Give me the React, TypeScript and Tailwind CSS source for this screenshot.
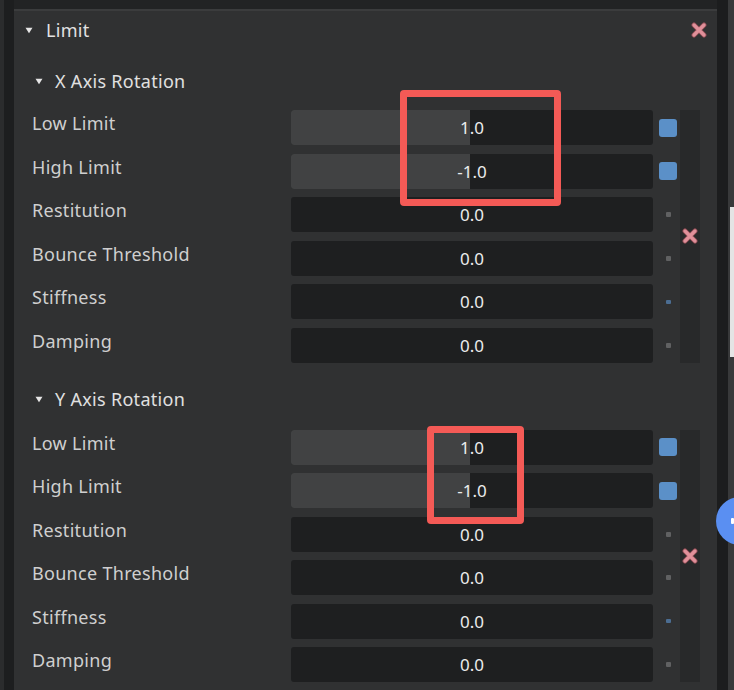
import type { ReactNode } from "react";

type Row = { label: string; value: string; slider?: boolean; marker: "blue" | "dot" | "bluedot" };

const rows: Row[] = [
  { label: "Low Limit", value: "1.0", slider: true, marker: "blue" },
  { label: "High Limit", value: "-1.0", slider: true, marker: "blue" },
  { label: "Restitution", value: "0.0", marker: "dot" },
  { label: "Bounce Threshold", value: "0.0", marker: "dot" },
  { label: "Stiffness", value: "0.0", marker: "bluedot" },
  { label: "Damping", value: "0.0", marker: "dot" },
];

function Triangle() {
  return (
    <svg width="8" height="7" viewBox="0 0 8 7" className="shrink-0">
      <path d="M0.5 0.8 L7.5 0.8 L4 6.2 Z" fill="#e6e6e6" />
    </svg>
  );
}

function PinkX() {
  return (
    <svg width="16" height="16" viewBox="0 0 16 16">
      <path d="M3 3 L13 13 M13 3 L3 13" stroke="#8a4a52" strokeWidth="5" strokeLinecap="round" />
      <path d="M3 3 L13 13 M13 3 L3 13" stroke="#e0909a" strokeWidth="3.4" strokeLinecap="round" />
    </svg>
  );
}

function Marker({ kind }: { kind: Row["marker"] }) {
  if (kind === "blue") return <div className="w-[18px] h-[18px] rounded-[3px] bg-[#5b90c8]" />;
  if (kind === "bluedot") return <div className="w-[5px] h-[4px] rounded-[1px] bg-[#4b6d92]" />;
  return <div className="w-[5px] h-[5px] rounded-[1px] bg-[#606162]" />;
}

function Field({ row }: { row: Row }) {
  return (
    <div className="flex h-[35px]">
      <div className="w-[259px] h-[24px] mt-[1px] leading-[24px] text-[18px] tracking-[0.3px] text-[#cfcfcf]">{row.label}</div>
      <div className="relative w-[362px] h-[35px] rounded-[3px] bg-[#1e1f20] overflow-hidden flex items-center justify-center">
        {row.slider && <div className="absolute left-0 top-0 bottom-0 w-[179px] bg-[#414243]" />}
        <span className="relative text-[17px] text-[#ececec] leading-none">{row.value}</span>
      </div>
      <div className="w-[18px] ml-[6px] flex items-center justify-center">
        <Marker kind={row.marker} />
      </div>
    </div>
  );
}

function Section({ title, children }: { title: string; children: ReactNode }) {
  return (
    <div className="flex flex-col">
      <div className="h-[38px] flex items-center pl-[21px] gap-[12px] text-[18px] tracking-[0.3px] text-[#e0e0e0]">
        <Triangle />
        <span>{title}</span>
      </div>
      {children}
    </div>
  );
}

function Body() {
  return (
    <div className="flex pl-[18px]">
      <div className="flex flex-col gap-[8.5px]">
        {rows.map((r) => (
          <Field key={r.label} row={r} />
        ))}
      </div>
      <div className="w-[20px] ml-[3px] bg-[#28292a] flex items-center justify-center">
        <PinkX />
      </div>
    </div>
  );
}

export default function App() {
  return (
    <div className="relative w-[734px] h-[690px] overflow-hidden bg-[#242526] flex font-['Noto_Sans',sans-serif]">
      <div className="w-[4px] bg-[#2b2c2d]" />
      <div className="w-[10px] bg-[#1d1e1f]" />

      <div className="w-[703px] flex flex-col">
        <div className="h-[9px] bg-[#222324]" />
        <div className="h-[2px] bg-[#3b3c3d]" />
        <div className="flex-1 bg-[#303132] flex flex-col">
          <div className="h-[38px] flex items-center pl-[11px] pr-[10px] gap-[13px] text-[18px] tracking-[0.3px] text-[#e2e2e2]">
            <Triangle />
            <span className="flex-1">Limit</span>
            <PinkX />
          </div>

          <div className="mt-[13px]">
            <Section title="X Axis Rotation">
              <div className="mt-[10px]">
                <Body />
              </div>
            </Section>
          </div>

          <div className="mt-[18px]">
            <Section title="Y Axis Rotation">
              <div className="mt-[11px]">
                <Body />
              </div>
            </Section>
          </div>
        </div>
      </div>

      <div className="w-[11px] bg-[#1c1d1e]" />
      <div className="w-[6px] bg-[#38393a] flex flex-col">
        <div className="h-[207px]" />
        <div className="h-[150px] ml-auto w-[4px] bg-[#e4e4e4]" />
      </div>

      {/* annotation boxes */}
      <div className="absolute left-[400px] top-[90px] w-[161px] h-[116px] border-[7px] border-[#f45a56] rounded-[4px]" />
      <div className="absolute left-[427px] top-[426px] w-[97px] h-[98px] border-[7px] border-[#f45a56] rounded-[4px]" />

      {/* floating button */}
      <div className="absolute left-[716px] top-[497px] w-[48px] h-[48px] rounded-full bg-[#5a8ff2] flex items-center pl-[15px]">
        <div className="w-[3px] h-[6px] bg-white rounded-[1px]" />
      </div>
    </div>
  );
}
